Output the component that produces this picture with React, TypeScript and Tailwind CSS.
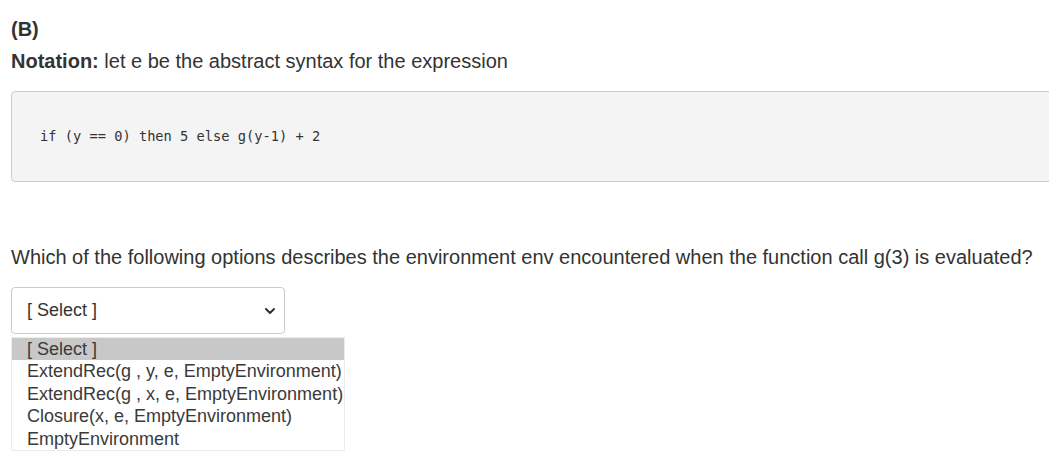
import { ChevronDown } from 'lucide-react';

const options = [
	'[ Select ]',
	'ExtendRec(g , y, e, EmptyEnvironment)',
	'ExtendRec(g , x, e, EmptyEnvironment)',
	'Closure(x, e, EmptyEnvironment)',
	'EmptyEnvironment',
];

const App = () => {
	return (
		<div
			className="w-[1049px] h-[459px] overflow-hidden bg-white text-[#333] pl-[11px]"
			style={{ fontFamily: '"Liberation Sans", Arial, sans-serif' }}
		>
			<div className="pt-[16px] text-[20px] leading-[26px] font-bold">(B)</div>
			<p className="mt-[6px] text-[20px] leading-[26px]">
				<b>Notation:</b> let e be the abstract syntax for the expression
			</p>
			<div className="mt-[17px] w-[1060px] h-[91px] rounded-[4px] border border-[#ccc] bg-[#f4f4f4] flex items-center pl-[28px]">
				<code
					className="text-[13.7px] text-[#333]"
					style={{ fontFamily: '"DejaVu Sans Mono", "Liberation Mono", monospace' }}
				>
					if (y == 0) then 5 else g(y-1) + 2
				</code>
			</div>
			<p className="mt-[62px] text-[20px] leading-[26px] whitespace-nowrap">
				Which of the following options describes the environment env encountered when the function call g(3) is
				evaluated?
			</p>
			<div className="mt-[17px] w-[274px] h-[47px] rounded-[4px] border border-[#ccc] flex items-center justify-between pl-[15px] pr-[6px]">
				<span className="text-[18px]">[ Select ]</span>
				<ChevronDown size={16} strokeWidth={3} className="text-[#333]" />
			</div>
			<ul className="mt-[3px] w-[334px] border border-[#ececec] text-[18px] leading-[22.4px] text-[#3a3a3a]">
				{options.map((o, i) => (
					<li key={o} className={`pl-[15px] whitespace-nowrap ${i === 0 ? 'bg-[#c8c8c8]' : ''}`}>
						{o}
					</li>
				))}
			</ul>
		</div>
	);
};

export default App;
